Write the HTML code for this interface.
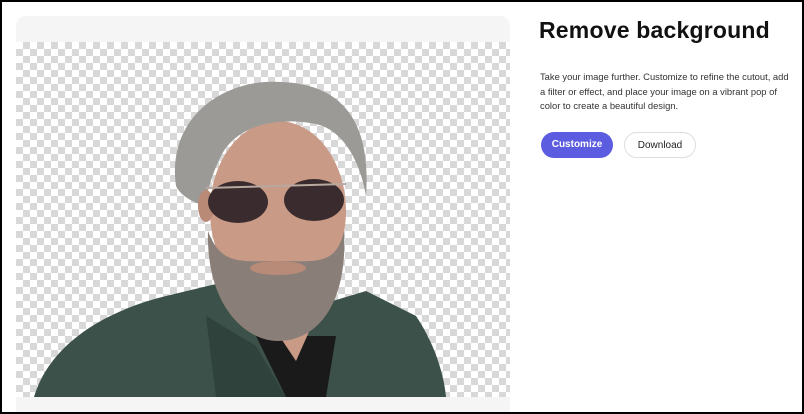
<!DOCTYPE html>
<html><head><style>
html,body{margin:0;padding:0;width:804px;height:414px;overflow:hidden;}
body{position:relative;background:#000;font-family:"Liberation Sans",sans-serif;}
.inner{position:absolute;left:2px;top:2px;width:800px;height:410px;background:#fff;overflow:hidden;}
.panel{position:absolute;left:14px;top:14px;width:494px;height:410px;background:#f5f5f5;border-radius:10px;overflow:hidden;}
.check{position:absolute;left:0;top:26px;width:494px;height:355px;
background-color:#fff;
background-image:linear-gradient(45deg,#d8d8d8 25%,transparent 25%,transparent 75%,#d8d8d8 75%),linear-gradient(45deg,#d8d8d8 25%,transparent 25%,transparent 75%,#d8d8d8 75%);
background-size:14px 14px;background-position:0 0,7px 7px;}
h1{position:absolute;margin:0;font-size:23px;font-weight:900;color:#111;letter-spacing:0.2px;}
p{position:absolute;margin:0;width:250px;font-size:9.4px;line-height:14.5px;color:#333;}
.btn{position:absolute;height:26px;border-radius:13px;font-size:10px;font-weight:bold;line-height:26px;text-align:center;box-sizing:border-box;}
.b1{width:72px;background:#5c5ce0;color:#fff;}
.b2{width:72px;border:1px solid #ddd;color:#222;font-weight:normal;}
</style></head><body>
<div class="inner">
<div class="panel"><div class="check"></div>
<svg style="position:absolute;left:0;top:0" width="494" height="410">
<path d="M18 381 C30 340 70 300 150 280 L200 268 L250 300 L300 290 L350 275 L400 300 C420 330 428 360 430 381 Z" fill="#3b5149"/>
<path d="M190 300 L240 330 L270 381 L200 381 Z" fill="#2f423b"/>
<path d="M240 320 L270 381 L310 381 L320 320 Z" fill="#1a1a1a"/>
<path d="M250 300 L280 345 L300 300 Z" fill="#c99a86"/>
<ellipse cx="262" cy="195" rx="68" ry="90" fill="#c99a86"/>
<path d="M192 215 C190 290 230 325 262 325 C300 325 332 290 328 215 C320 250 300 245 262 245 C225 245 205 250 192 215 Z" fill="#8a7f78"/>
<ellipse cx="262" cy="252" rx="28" ry="7" fill="#b88a78"/>
<path d="M160 170 C150 100 210 62 265 66 C330 68 355 110 350 180 C345 150 330 115 300 108 C260 100 220 110 205 140 C195 160 192 175 188 190 C175 185 165 180 160 170 Z" fill="#9c9a96"/>
<ellipse cx="190" cy="190" rx="8" ry="16" fill="#b98a76"/>
<ellipse cx="222" cy="186" rx="30" ry="21" fill="#3a2c2e"/>
<ellipse cx="298" cy="184" rx="30" ry="21" fill="#3a2c2e"/>
<path d="M190 172 L330 168" stroke="#b8a8a0" stroke-width="2"/>
</svg>
</div>
<h1 style="left:537px;top:15px">Remove background</h1>
<p style="left:538px;top:68px">Take your image further. Customize to refine the cutout, add a filter or effect, and place your image on a vibrant pop of color to create a beautiful design.</p>
<div class="btn b1" style="left:539px;top:130px">Customize</div>
<div class="btn b2" style="left:622px;top:130px">Download</div>
</div>
</body></html>
